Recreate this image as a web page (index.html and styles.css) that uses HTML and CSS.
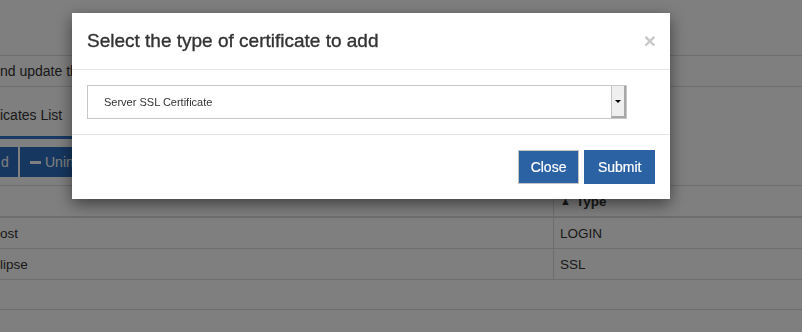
FILE: index.html
```html
<!DOCTYPE html>
<html>
<head>
<meta charset="utf-8">
<link rel="stylesheet" href="styles.css">
</head>
<body>
<div class="page">
  <div class="top"></div>
  <div class="desc">nd update the certificates used by this server.</div>
  <div class="tabs"><div class="tab">icates List</div></div>
  <div class="toolbar">
    <button class="tbtn tbtn-first">d</button>
    <button class="tbtn"><span class="minus"></span>Uninstall</button>
  </div>
  <div class="grid">
    <div class="row head">
      <div class="c1"></div>
      <div class="c2"><span class="sort">▲</span>Type</div>
    </div>
    <div class="row">
      <div class="c1">ost</div>
      <div class="c2">LOGIN</div>
    </div>
    <div class="row">
      <div class="c1">lipse</div>
      <div class="c2">SSL</div>
    </div>
    <div class="row foot"></div>
  </div>
</div>

<div class="backdrop"></div>

<div class="modal">
  <div class="mhead">
    <h4 class="mtitle">Select the type of certificate to add</h4>
    <span class="x">×</span>
  </div>
  <div class="mbody">
    <div class="select">
      <span class="sel-text">Server SSL Certificate</span>
      <span class="sel-arrow"><span class="tri"></span></span>
    </div>
  </div>
  <div class="mfoot">
    <button class="btn btn-close">Close</button>
    <button class="btn btn-submit">Submit</button>
  </div>
</div>
</body>
</html>
```

FILE: styles.css
```css
* { box-sizing: border-box; }

body {
  margin: 0;
  font-family: "Liberation Sans", Arial, sans-serif;
  color: #333;
  background: #fff;
  overflow: hidden;
}

.top { height: 55px; }

.desc {
  height: 32px;
  border-top: 1px solid #ddd;
  border-bottom: 1px solid #ddd;
  font-size: 14px;
  line-height: 30px;
  white-space: nowrap;
}

.tab {
  width: 140px;
  height: 52px;
  padding-top: 18px;
  font-size: 14px;
  line-height: 20px;
  border-bottom: 3px solid #2e72c6;
  white-space: nowrap;
}

.toolbar {
  display: flex;
  gap: 2px;
  padding: 8px 0;
}

.tbtn {
  height: 30px;
  border: 0;
  padding: 0 10px;
  background: #2c6ebf;
  color: #fff;
  font-family: "Liberation Sans", Arial, sans-serif;
  font-size: 14px;
  display: flex;
  align-items: center;
  gap: 4px;
}

.tbtn-first {
  width: 18px;
  padding: 0 0 0 1px;
}

.minus {
  display: inline-block;
  width: 11px;
  height: 3px;
  background: #fff;
}

.grid {
  border-top: 1px solid #ddd;
  font-size: 13.5px;
}

.row {
  display: flex;
  height: 31px;
  border-bottom: 1px solid #ddd;
}

.row.head {
  height: 32px;
  border-bottom: 2px solid #ddd;
  font-weight: bold;
}

.row.foot { height: 30px; }

.c1 {
  width: 554px;
  border-right: 1px solid #ddd;
  display: flex;
  align-items: center;
}

.row.foot .c1 { border-right: 0; }

.c2 {
  display: flex;
  align-items: center;
  padding-left: 6px;
}

.sort {
  font-size: 11px;
  margin-right: 5px;
  font-weight: normal;
}

.backdrop {
  position: fixed;
  inset: 0;
  background: rgba(0, 0, 0, 0.5);
}

.modal {
  position: fixed;
  top: 13px;
  left: 72px;
  width: 598px;
  background: #fff;
  box-shadow: 0 5px 15px rgba(0, 0, 0, 0.5);
}

.mhead {
  display: flex;
  align-items: center;
  justify-content: space-between;
  padding: 15px;
  border-bottom: 1px solid #e5e5e5;
  height: 57px;
}

.mtitle {
  margin: 0;
  font-size: 19px;
  line-height: 26px;
  font-weight: normal;
  color: #333;
  -webkit-text-stroke: 0.35px #333;
}

.x {
  font-size: 21px;
  font-weight: bold;
  line-height: 1;
  color: #c8c8c8;
  margin-right: -1px;
  margin-top: -2px;
}

.mbody { padding: 15px; }

.select {
  width: 540px;
  height: 34px;
  border: 1px solid #c8c8c8;
  display: flex;
  align-items: center;
  font-size: 11px;
  color: #333;
}

.sel-text { padding-left: 16px; }

.sel-arrow {
  margin-left: auto;
  align-self: stretch;
  width: 15px;
  background: #efefef;
  border-left: 1px solid #c4c4c4;
  border-right: 2px solid #a8a8a8;
  border-bottom: 2px solid #a8a8a8;
  display: flex;
  align-items: center;
  justify-content: center;
}

.tri {
  width: 0;
  height: 0;
  border-left: 3px solid transparent;
  border-right: 3px solid transparent;
  border-top: 3px solid #000;
}

.mfoot {
  padding: 15px;
  border-top: 1px solid #e5e5e5;
  display: flex;
  justify-content: flex-end;
  gap: 5px;
}

.btn {
  height: 34px;
  padding: 0 12px;
  background: #2b62a4;
  border: 1px solid #2b62a4;
  color: #fff;
  font-family: "Liberation Sans", Arial, sans-serif;
  font-size: 14px;
  -webkit-text-stroke: 0.2px #fff;
}

.btn-submit { padding: 0 12.5px; }

.btn-close { border-color: #c4c4c4; }
```
